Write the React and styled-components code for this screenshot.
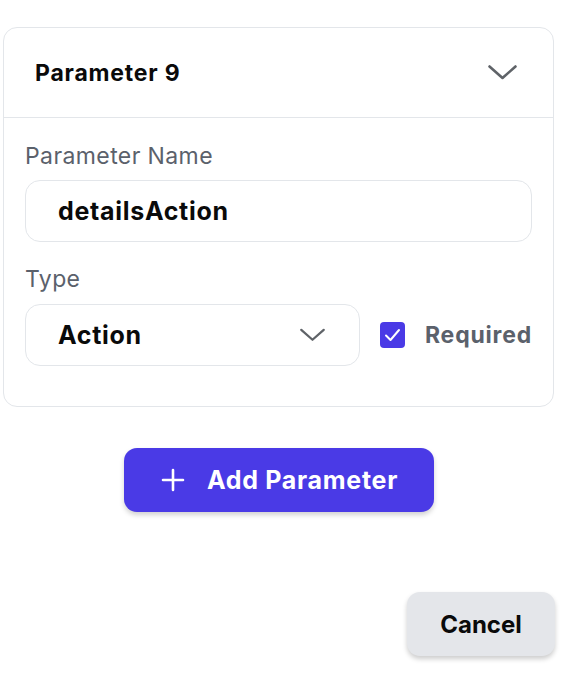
import React from 'react'
import styled, { createGlobalStyle } from 'styled-components'

const GlobalStyle = createGlobalStyle`
  body {
    margin: 0;
    background: #ffffff;
    font-family: Inter, "Open Sans", Arial, sans-serif;
  }
`

const Page = styled.div`
  width: 568px;
  height: 684px;
  padding: 27px 14px 0 3px;
  box-sizing: border-box;
  display: flex;
  flex-direction: column;
  overflow: hidden;
`

const Card = styled.div`
  width: 551px;
  border: 1.5px solid #e3e6ea;
  border-radius: 14px;
  box-sizing: border-box;
`

const Header = styled.div`
  height: 89px;
  display: flex;
  align-items: center;
  justify-content: space-between;
  padding: 0 36px 0 31px;
  border-bottom: 1.5px solid #e3e6ea;
`

const Title = styled.div`
  font-size: 23px;
  font-weight: 700;
  color: #0a0a0a;
  letter-spacing: 0.8px;
`

const Body = styled.div`
  padding: 26px 21px 40px 21px;
  display: flex;
  flex-direction: column;
`

const Label = styled.div`
  font-size: 23px;
  line-height: 24px;
  color: #5b616b;
  letter-spacing: 0.4px;
  margin-bottom: ${p => p.$gap || 12}px;
`

const Field = styled.div`
  height: 62px;
  border: 1.5px solid #e3e6ea;
  border-radius: 15px;
  box-sizing: border-box;
  display: flex;
  align-items: center;
  justify-content: space-between;
  padding: 0 34px 0 32px;
  font-size: 25px;
  font-weight: 700;
  color: #0a0a0a;
  letter-spacing: 0.7px;
  width: ${p => p.$width || 'auto'};
`

const Row = styled.div`
  display: flex;
  align-items: center;
`

const Spacer = styled.div`
  height: 25px;
`

const Check = styled.label`
  display: flex;
  align-items: center;
  margin-left: 20px;
  gap: 20px;
  font-size: 23px;
  font-weight: 700;
  color: #5b616b;
  letter-spacing: 0.8px;
`

const Box = styled.span`
  width: 25px;
  height: 26px;
  border-radius: 4px;
  background: #4a3ae6;
  display: flex;
  align-items: center;
  justify-content: center;
`

const AddWrap = styled.div`
  width: 551px;
  display: flex;
  justify-content: center;
  margin-top: 41px;
`

const AddButton = styled.button`
  width: 310px;
  height: 64px;
  border: none;
  border-radius: 13px;
  background: #4a3ae6;
  color: #ffffff;
  font-family: inherit;
  font-size: 25px;
  font-weight: 700;
  letter-spacing: 0.7px;
  display: flex;
  align-items: center;
  justify-content: center;
  gap: 22px;
  padding: 0 0 0 2px;
  box-shadow: 0 3px 5px rgba(0, 0, 0, 0.18);
`

const Footer = styled.div`
  width: 552px;
  display: flex;
  justify-content: flex-end;
  margin-top: 80px;
`

const CancelButton = styled.button`
  width: 148px;
  height: 64px;
  border: none;
  border-radius: 13px;
  background: #e4e6ea;
  color: #0a0a0a;
  font-family: inherit;
  font-size: 24px;
  font-weight: 700;
  letter-spacing: 0;
  box-shadow: 0 3px 5px rgba(0, 0, 0, 0.2);
`

const Chevron = ({ w = 29, h = 15 }) => (
  <svg width={w} height={h} viewBox="0 0 29 15" fill="none">
    <path d="M1.5 1.5 L14.5 13 L27.5 1.5" stroke="#5f6368" strokeWidth="2.6" strokeLinecap="round" strokeLinejoin="round" />
  </svg>
)

export default function App() {
  return (
    <>
      <GlobalStyle />
      <Page>
        <Card>
          <Header>
            <Title>Parameter 9</Title>
            <Chevron />
          </Header>
          <Body>
            <Label>Parameter Name</Label>
            <Field>detailsAction</Field>
            <Spacer />
            <Label $gap={13}>Type</Label>
            <Row>
              <Field $width="335px">
                Action
                <Chevron w={25} h={14} />
              </Field>
              <Check>
                <Box>
                  <svg width="17" height="14" viewBox="0 0 17 14" fill="none">
                    <path d="M2 7.5 L6.5 12 L15 2" stroke="#ffffff" strokeWidth="2" strokeLinecap="round" strokeLinejoin="round" />
                  </svg>
                </Box>
                Required
              </Check>
            </Row>
          </Body>
        </Card>
        <AddWrap>
          <AddButton>
            <svg width="24" height="24" viewBox="0 0 24 24" fill="none">
              <path d="M12 2 V22 M2 12 H22" stroke="#ffffff" strokeWidth="2.6" strokeLinecap="round" />
            </svg>
            Add Parameter
          </AddButton>
        </AddWrap>
        <Footer>
          <CancelButton>Cancel</CancelButton>
        </Footer>
      </Page>
    </>
  )
}
